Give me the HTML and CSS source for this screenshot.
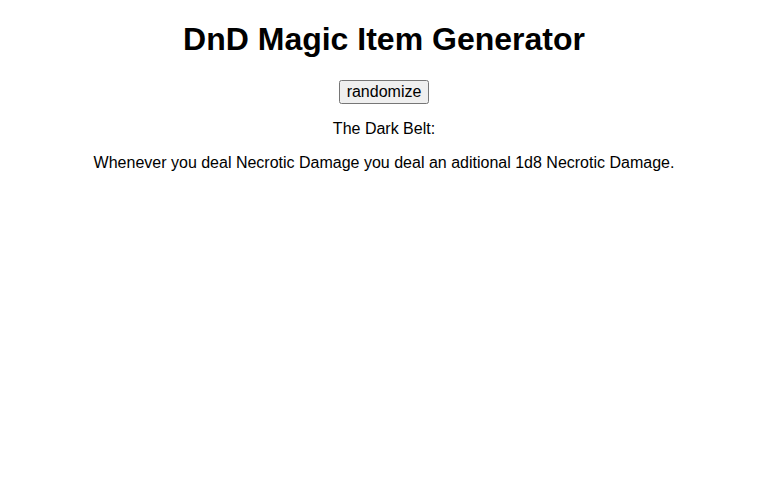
FILE: index.html
```html
<!DOCTYPE html>
<html lang="en">
<head>
<meta charset="utf-8">
<title>DnD Magic Item Generator</title>
<link rel="stylesheet" href="styles.css">
</head>
<body>
  <main class="app">
    <h1 class="title">DnD Magic Item Generator</h1>
    <button class="randomize" type="button">randomize</button>
    <p class="item-name">The Dark Belt:</p>
    <p class="item-effect">Whenever you deal Necrotic Damage you deal an aditional 1d8 Necrotic Damage.</p>
  </main>
</body>
</html>
```
FILE: styles.css
```css
body {
  margin: 0 8px;
  font-family: "Liberation Sans", Arial, sans-serif;
  color: #000;
  background: #fff;
}

.app {
  text-align: center;
}

.title {
  font-size: 32px;
  font-weight: bold;
  margin: 21.44px 0;
}

.randomize {
  font-family: "Liberation Sans", Arial, sans-serif;
  font-size: 16px;
}

.item-name,
.item-effect {
  margin: 16px 0;
  font-size: 16px;
}
```
